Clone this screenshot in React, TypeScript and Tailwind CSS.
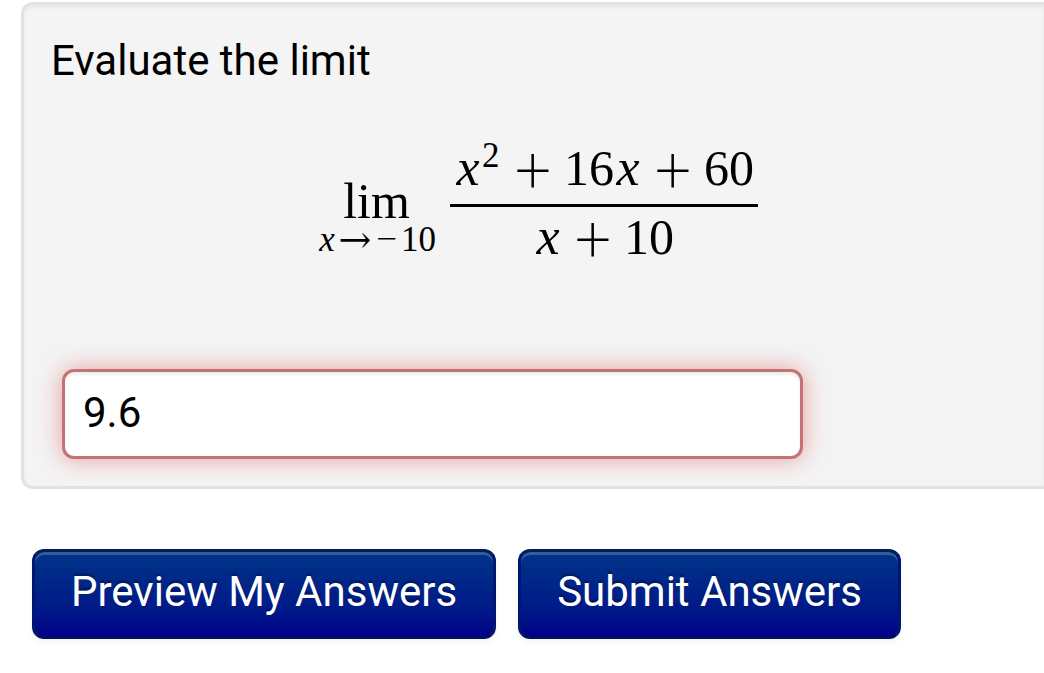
import { useState } from 'react';
import type { ReactNode } from 'react';

const serif = 'font-["Liberation_Serif",serif]';
const buttonClass =
  'h-[90px] rounded-xl border-3 border-t-[#001f54] border-x-[#001670] border-b-[#00105c] bg-linear-to-b from-[#003388] to-[#000088] px-9 pb-1 text-white shadow-[inset_0_3px_0_rgba(255,255,255,0.2),0_3px_6px_rgba(0,0,0,0.05)] [text-shadow:0_-3px_0_rgba(0,0,0,0.25)]';

function Var({ children }: { children: ReactNode }) {
  return <i className="w-7 text-center text-[52px]">{children}</i>;
}

function Plus() {
  return <span className="w-[62px] self-start text-center font-[Roboto,sans-serif] text-[64px] leading-[66px] font-extralight">+</span>;
}

function Limit() {
  return (
    <div className={`flex items-center justify-center gap-[14px] text-[50px] leading-[60px] ${serif}`}>
      {/* limit operator with its subscript */}
      <div className="flex flex-col items-center pt-[19px]">
        <span className="leading-[50px]">lim</span>
        <span className="flex text-[35px] leading-[28px]">
          <i className="w-5 text-center">x</i>
          <span className="w-9 text-center font-['DejaVu_Math_TeX_Gyre','Liberation_Serif',serif]">→</span>
          <span className="w-7 text-center font-[Roboto,sans-serif] text-[42px] font-extralight">−</span>
          <span>10</span>
        </span>
      </div>
      {/* fraction */}
      <div className="flex flex-col items-center">
        <span className="flex items-baseline border-b-3 border-black px-1">
          <Var>x</Var>
          <sup className="top-0 w-5 self-start text-[35px] leading-[36px]">2</sup>
          <Plus />
          <span>16</span>
          <Var>x</Var>
          <Plus />
          <span>60</span>
        </span>
        <span className="flex items-baseline">
          <Var>x</Var>
          <Plus />
          <span>10</span>
        </span>
      </div>
    </div>
  );
}

export default function App() {
  const [answer, setAnswer] = useState('9.6');

  return (
    <form
      className="min-h-screen bg-white pt-[2px] pl-[21px] font-[Roboto,sans-serif] text-[42px] leading-[60px] text-black"
      onSubmit={(e) => e.preventDefault()}
    >
      <div className="rounded-l-xl border-3 border-r-0 border-[#e2e2e2] bg-[#f4f4f4] pt-[26px] pr-5 pb-[27px] pl-[27px] shadow-[inset_0_3px_3px_rgba(0,0,0,0.05)]">
        <label htmlFor="answer" className="block">Evaluate the limit</label>
        <div className="pt-[47px] pb-24">
          <Limit />
        </div>
        <div className="pl-[11px]">
          <input
            id="answer"
            type="text"
            className="block h-[90px] w-[741px] max-w-full rounded-xl border-3 border-[#c27474] bg-white px-[18px] pb-1 shadow-[inset_0_3px_3px_rgba(0,0,0,0.07),0_0_24px_rgba(225,110,110,0.65)] outline-none"
            value={answer}
            onChange={(e) => setAnswer(e.target.value)}
          />
        </div>
      </div>
      <div className="flex flex-wrap gap-[22px] pt-[60px] pl-[11px]">
        <button type="button" className={buttonClass}>Preview My Answers</button>
        <button type="submit" className={buttonClass}>Submit Answers</button>
      </div>
    </form>
  );
}
